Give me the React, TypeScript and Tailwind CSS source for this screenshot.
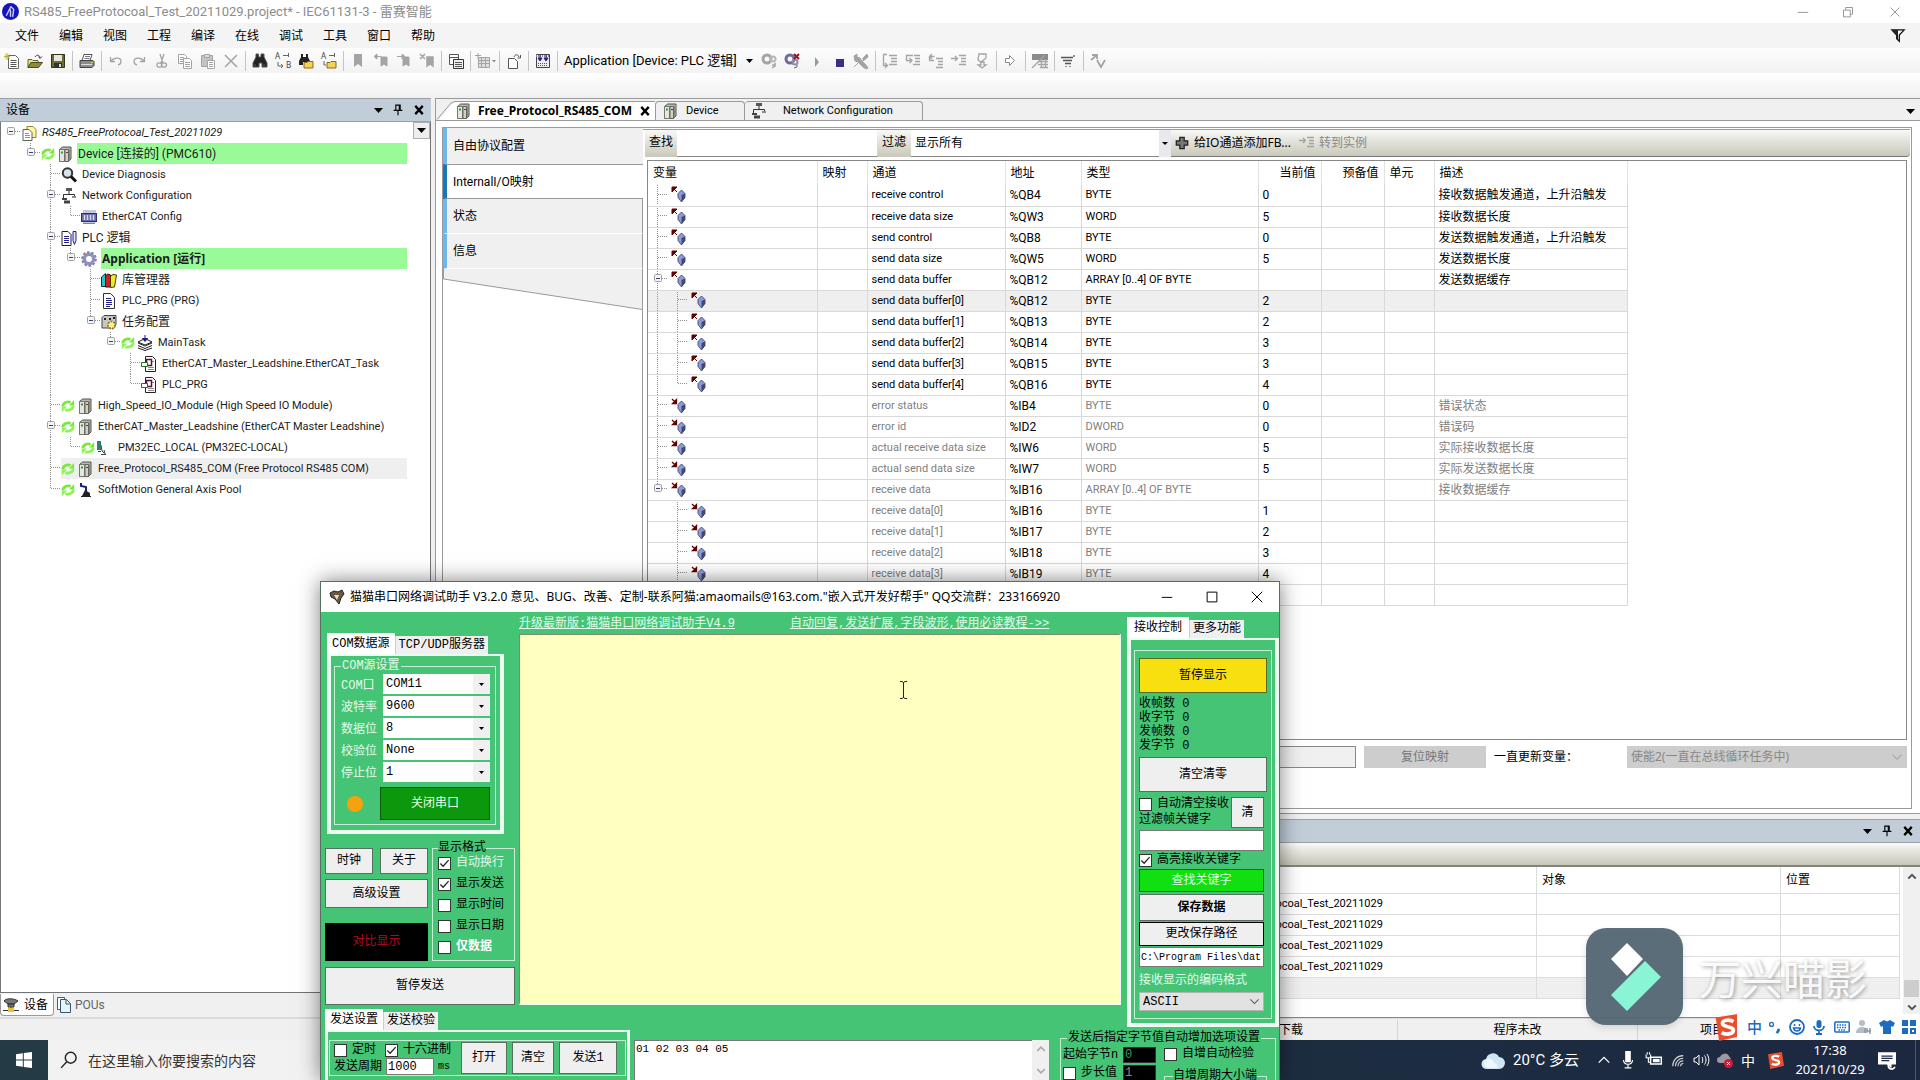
import { type ReactNode } from 'react'
import { clsx } from 'clsx'

const menus = ['文件', '编辑', '视图', '工程', '编译', '在线', '调试', '工具', '窗口', '帮助']

type TreeItem = { guide: string; icon: string; text: string; online?: boolean; tone?: 'root' | 'run' | 'app' | 'sel' }

// guide: one character per level. b/e/m = expander, t/l = branch, | = line
const tree: TreeItem[] = [
  { guide: 'b', icon: 'project', text: 'RS485_FreeProtocoal_Test_20211029', tone: 'root' },
  { guide: ' e', icon: 'device', text: 'Device [连接的] (PMC610)', online: true, tone: 'run' },
  { guide: '  t', icon: 'magnifier', text: 'Device Diagnosis' },
  { guide: '  m', icon: 'network', text: 'Network Configuration' },
  { guide: '  |l', icon: 'ethercat', text: 'EtherCAT Config' },
  { guide: '  m', icon: 'plc', text: 'PLC 逻辑' },
  { guide: '  |e', icon: 'gear', text: 'Application [运行]', tone: 'app' },
  { guide: '  | t', icon: 'books', text: '库管理器' },
  { guide: '  | t', icon: 'pou', text: 'PLC_PRG (PRG)' },
  { guide: '  | e', icon: 'taskcfg', text: '任务配置' },
  { guide: '  |  e', icon: 'task', text: 'MainTask', online: true },
  { guide: '  |   t', icon: 'call', text: 'EtherCAT_Master_Leadshine.EtherCAT_Task' },
  { guide: '  |   l', icon: 'call', text: 'PLC_PRG' },
  { guide: '  t', icon: 'device', text: 'High_Speed_IO_Module (High Speed IO Module)', online: true },
  { guide: '  m', icon: 'device', text: 'EtherCAT_Master_Leadshine (EtherCAT Master Leadshine)', online: true },
  { guide: '  |l', icon: 'drive', text: 'PM32EC_LOCAL (PM32EC-LOCAL)', online: true },
  { guide: '  t', icon: 'device', text: 'Free_Protocol_RS485_COM (Free Protocol RS485 COM)', online: true, tone: 'sel' },
  { guide: '  l', icon: 'axis', text: 'SoftMotion General Axis Pool', online: true },
]

type Channel = { guide: string; name: string; addr: string; type: string; value: string; desc?: string }

const channels: Channel[] = [
  { guide: 't', name: 'receive control', addr: '%QB4', type: 'BYTE', value: '0', desc: '接收数据触发通道，上升沿触发' },
  { guide: 't', name: 'receive data size', addr: '%QW3', type: 'WORD', value: '5', desc: '接收数据长度' },
  { guide: 't', name: 'send control', addr: '%QB8', type: 'BYTE', value: '0', desc: '发送数据触发通道，上升沿触发' },
  { guide: 't', name: 'send data size', addr: '%QW5', type: 'WORD', value: '5', desc: '发送数据长度' },
  { guide: 'm', name: 'send data buffer', addr: '%QB12', type: 'ARRAY [0..4] OF BYTE', value: '', desc: '发送数据缓存' },
  { guide: '|t', name: 'send data buffer[0]', addr: '%QB12', type: 'BYTE', value: '2' },
  { guide: '|t', name: 'send data buffer[1]', addr: '%QB13', type: 'BYTE', value: '2' },
  { guide: '|t', name: 'send data buffer[2]', addr: '%QB14', type: 'BYTE', value: '3' },
  { guide: '|t', name: 'send data buffer[3]', addr: '%QB15', type: 'BYTE', value: '3' },
  { guide: '|l', name: 'send data buffer[4]', addr: '%QB16', type: 'BYTE', value: '4' },
  { guide: 't', name: 'error status', addr: '%IB4', type: 'BYTE', value: '0', desc: '错误状态' },
  { guide: 't', name: 'error id', addr: '%ID2', type: 'DWORD', value: '0', desc: '错误码' },
  { guide: 't', name: 'actual receive data size', addr: '%IW6', type: 'WORD', value: '5', desc: '实际接收数据长度' },
  { guide: 't', name: 'actual send data size', addr: '%IW7', type: 'WORD', value: '5', desc: '实际发送数据长度' },
  { guide: 'e', name: 'receive data', addr: '%IB16', type: 'ARRAY [0..4] OF BYTE', value: '', desc: '接收数据缓存' },
  { guide: ' t', name: 'receive data[0]', addr: '%IB16', type: 'BYTE', value: '1' },
  { guide: ' t', name: 'receive data[1]', addr: '%IB17', type: 'BYTE', value: '2' },
  { guide: ' t', name: 'receive data[2]', addr: '%IB18', type: 'BYTE', value: '3' },
  { guide: ' t', name: 'receive data[3]', addr: '%IB19', type: 'BYTE', value: '4' },
  { guide: ' l', name: 'receive data[4]', addr: '%IB20', type: 'BYTE', value: '5' },
]

const serialSettings = [
  { label: 'COM口', value: 'COM11' },
  { label: '波特率', value: '9600' },
  { label: '数据位', value: '8' },
  { label: '校验位', value: 'None' },
  { label: '停止位', value: '1' },
]

const UI = '[font-family:Noto_Sans,Noto_Sans_CJK_SC,sans-serif]'
const NARROW = '[font-family:Roboto,Noto_Sans_CJK_SC,sans-serif]'
const SONG = '[font-family:Liberation_Mono,Noto_Sans_CJK_SC,monospace]'

const hasHan = (s: string) => /[\u4e00-\u9fff]/.test(s)

function Svg({ children, className, size = 16 }: { children: ReactNode; className?: string; size?: number }) {
  return (
    <svg width={size} height={size} viewBox="0 0 16 16" fill="none" aria-hidden="true" className={clsx('shrink-0 overflow-visible', className)}>
      {children}
    </svg>
  )
}

function Guide({ kind }: { kind: string }) {
  const box = 'bem'.includes(kind)
  return (
    <svg width="20" height="21" viewBox="0 0 20 21" aria-hidden="true" className="shrink-0">
      <g stroke="#909090" strokeDasharray="1 1" fill="none">
        {'|tm'.includes(kind) && <path d="M9.500 0V21" />}
        {'le'.includes(kind) && <path d="M9.500 0V10" />}
        {(box || 'tl'.includes(kind)) && <path d="M10 9.500H20" />}
      </g>
      {box && (
        <>
          <rect x="6.500" y="5.500" width="7" height="7" rx="1" fill="#f4f4f4" stroke="#a0a0a0" />
          <path d="M8 9.500H12" stroke="#304080" />
        </>
      )}
    </svg>
  )
}

function TreeIcon({ name }: { name: string }) {
  switch (name) {
    case 'project':
      return (
        <Svg>
          <path d="M6 1.500h6l3 3v8H6z" fill="#fff6a0" stroke="#8a8a30" />
          <path d="M2 4.500h6l3 3v8H2z" fill="#fff" stroke="#606060" />
          <path d="M4 8.500h4M4 10.500h5M4 12.500h5" stroke="#909090" />
        </Svg>
      )
    case 'device':
      return (
        <Svg>
          <path d="M2.500 3.500l3-2.500h8.500v12l-2.500 2.500h-9z" fill="#b9b9b4" stroke="#55554f" />
          <path d="M2.500 3.500h5v12h-5z" fill="#e4e6e0" stroke="#77776f" />
          <path d="M8 3.500h3.500v12H8z" fill="#d0d0ca" stroke="#66665f" />
          <path d="M12 3.500l2-2v11l-2 2.500z" fill="#888882" />
          <path d="M4 6.500h2" stroke="#2ca02c" strokeWidth="2" />
          <path d="M9 6.500h2" stroke="#a02020" />
        </Svg>
      )
    case 'magnifier':
      return (
        <Svg>
          <circle cx="6.500" cy="6" r="4.700" fill="#d8e4ea" stroke="#333" strokeWidth="2" />
          <path d="M10 9.500l5 5" stroke="#111" strokeWidth="3" />
        </Svg>
      )
    case 'network':
      return (
        <Svg>
          <path d="M5 0h6v3H5z" fill="#555" />
          <path d="M8 3v3.500M2.500 10V6.500h11V9" stroke="#333" />
          <path d="M1 10h5v2H1zM3 12.500h6v3H3z" fill="#444" />
          <path d="M11 9h4" stroke="#8a8a9a" strokeWidth="2" />
        </Svg>
      )
    case 'ethercat':
      return (
        <Svg>
          <rect x="2" y="1" width="13" height="13" fill="#c5c9dc" />
          <rect x="0.500" y="4.500" width="15" height="8" fill="#6a6aa8" stroke="#2e2e70" />
          <path d="M3.500 6v5M6.500 6v5M9.500 6v5M12.500 6v5" stroke="#d8d8f4" strokeWidth="1.500" />
          <path d="M2 14.500h12" stroke="#8080b0" />
        </Svg>
      )
    case 'plc':
      return (
        <Svg>
          <path d="M1 1.500h6l3 3v11H1z" fill="#fff" stroke="#222" />
          <path d="M3 6.500h5M3 8.500h5M3 10.500h5M3 12.500h5" stroke="#22228a" />
          <path d="M12 1.500h3v9l-1.500 4-1.500-4z" fill="#dfe2ff" stroke="#22228a" />
        </Svg>
      )
    case 'gear':
      return (
        <Svg>
          <circle cx="8" cy="8" r="6.800" stroke="#7c7ca0" strokeWidth="2" strokeDasharray="2.500 1.770" />
          <circle cx="8" cy="8" r="4.700" fill="#fff" stroke="#9090b8" strokeWidth="3.500" />
        </Svg>
      )
    case 'books':
      return (
        <Svg>
          <path d="M0.500 5l4-3.500v13h-4z" fill="#20c8c8" stroke="#053838" />
          <path d="M4.500 4l2-2 3 1v12h-5z" fill="#d02020" stroke="#400" />
          <path d="M9.500 4l2.500-1.500 3.500.5-2 12-4 .500z" fill="#f2e830" stroke="#443c00" />
        </Svg>
      )
    case 'pou':
      return (
        <Svg>
          <path d="M2.500 0.500h7l4 4v11h-11z" fill="#fff" stroke="#333" />
          <path d="M5 5.500h5M5 7.500h6M5 9.500h6M5 11.500h6M5 13.500h4" stroke="#22228a" />
        </Svg>
      )
    case 'taskcfg':
      return (
        <Svg>
          <path d="M1 3.500l2-2h12v9l-2 3.500H1z" fill="#c8c8c2" stroke="#444" />
          <path d="M3 5h2M8 5h2M12 4h2" stroke="#222" strokeWidth="2" />
          <circle cx="10.500" cy="11" r="3.500" fill="#fff" stroke="#8f7a10" strokeWidth="2" strokeDasharray="2 1" />
          <circle cx="10.500" cy="11" r="2" fill="#ffee60" />
        </Svg>
      )
    case 'task':
      return (
        <Svg>
          <path d="M1 8l7 3 7-3M1 10.500l7 3 7-3M1 13l7 2.500 7-2.500" stroke="#222" />
          <path d="M1 7l7-3.500L15 7l-7 3z" fill="#fff" stroke="#222" />
          <path d="M8 0v5M5.500 3.500L8 6.500l2.500-3z" fill="#1a1a8a" stroke="#1a1a8a" />
        </Svg>
      )
    case 'call':
      return (
        <Svg>
          <path d="M4.500 0.500h7l3 3v12h-10z" fill="#fff" stroke="#222" />
          <path d="M7 11.500h6M7 13.500h6M11 5.500h2" stroke="#888" />
          <path d="M5.500 3.500h5v6h-5z" stroke="#5a1040" strokeWidth="1.500" />
          <path d="M0.500 6.500h6v4h-6z" fill="#fff" stroke="#207020" />
        </Svg>
      )
    case 'drive':
      return (
        <Svg>
          <path d="M0 1h4v9H0z" fill="#2f7f78" />
          <path d="M1 11.500h3M4 5l1 6 2 2M4 14.500h5M7 10l1 4" stroke="#444" />
        </Svg>
      )
    default:
      return (
        <Svg>
          <path d="M4 1v3l5 1v4" stroke="#1a1a8a" strokeWidth="2" />
          <path d="M8 8l5 3v3H5z" fill="#222" />
          <path d="M4 14.500h10" stroke="#222" />
        </Svg>
      )
  }
}

function OnlineIcon() {
  return (
    <Svg size={14}>
      <path d="M2 8.500A6 5.500 0 0 1 11 4" stroke="#7be83c" strokeWidth="3.200" />
      <path d="M14 7.500A6 5.500 0 0 1 5 12" stroke="#8cf45c" strokeWidth="3.200" />
      <path d="M9 7.500h6V1z" fill="#7be83c" />
      <path d="M7 8.500H1V15z" fill="#8cf45c" />
    </Svg>
  )
}

function PinIcon() {
  return (
    <Svg size={14}>
      <path d="M5.500 2.500h5v6h-5zM9.500 2.500v6M3 8.500h10M8 9v5" stroke="#000" strokeWidth="1.300" />
    </Svg>
  )
}

function CloseIcon({ className }: { className?: string }) {
  return (
    <Svg size={12} className={className}>
      <path d="M3 2.500l10 11M13 2.500l-10 11" stroke="#000" strokeWidth="3" />
    </Svg>
  )
}

function DownIcon({ className }: { className?: string }) {
  return (
    <svg width="9" height="5" viewBox="0 0 9 5" aria-hidden="true" className={clsx('shrink-0', className)}>
      <path d="M0 0h9L4.500 5z" fill="#000" />
    </svg>
  )
}

function PanelHeader({ title }: { title?: string }) {
  return (
    <div className="flex h-6 items-center gap-2 border-y border-[#9aa0a6] bg-[#c1cdd9] px-[6px]">
      <h2 className="flex-1 text-[12px] leading-5 text-black">{title}</h2>
      <button type="button" aria-label="菜单"><DownIcon /></button>
      <button type="button" aria-label="固定"><PinIcon /></button>
      <button type="button" aria-label="关闭"><CloseIcon /></button>
    </div>
  )
}

/* ---------- toolbar ---------- */

const G = '#a4a4a4'

const toolIcons: Record<string, ReactNode> = {
  new: (
    <>
      <path d="M4.500 2.500h7l3 3v10h-10z" fill="#fff" stroke="#666" />
      <path d="M6.500 7.500h6M6.500 9.500h6M6.500 11.500h6M6.500 13.500h6" stroke="#555" />
      <path d="M0 3.500h6M3 0v7M1 1.500l4 4M5 1.500l-4 4" stroke="#b4b43c" />
    </>
  ),
  open: (
    <>
      <path d="M1 6.500h4l1 1h5v2H4l-3 5z" fill="#e8e48a" stroke="#66662a" />
      <path d="M4 9.500h11.500l-4 5H1z" fill="#8c8c3c" stroke="#4c4c1c" />
      <path d="M8 4c2-3 5-2 5 1M11.500 3.500L13 5.500l2-2" stroke="#444" />
    </>
  ),
  save: (
    <>
      <path d="M1.500 1.500h13v13h-13z" fill="#6b6b32" stroke="#333318" />
      <path d="M4 2h8v6H4z" fill="#e6e6e6" />
      <path d="M4 10h8v5H4z" fill="#333" />
      <path d="M9 11h2v3H9z" fill="#ddd" />
    </>
  ),
  print: (
    <>
      <path d="M5 1.500h8l-2 6H3z" fill="#fff" stroke="#555" />
      <path d="M6 3.500h5M5.500 5.500h5" stroke="#777" />
      <path d="M1 7.500h13l1 1v4l-2 2H1z" fill="#8c8c8c" stroke="#444" />
      <path d="M2 11.500h11" stroke="#ddd" />
      <path d="M13 9v1" stroke="#e0d020" strokeWidth="2" />
    </>
  ),
  undo: <path d="M2.500 4v4.500H7M3 8c3-4 10-4 10 .5 0 2-1 3-3 3.500" stroke={G} strokeWidth="1.300" />,
  redo: <path d="M13.500 4v4.500H9M13 8C10 4 3 4 3 8.500 3 10.500 4 11.500 6 12" stroke={G} strokeWidth="1.300" />,
  cut: <path d="M6 1l3 9M10 1L7 10M6 10a2.200 2.200 0 1 0 0 4 2 2 0 0 0 0-4zM10.500 10a2.200 2.200 0 1 0 0 4 2 2 0 0 0 0-4z" stroke={G} strokeWidth="1.300" />,
  copy: (
    <>
      <path d="M1.500 1.500h6l2 2v7h-8z" fill="#fff" stroke={G} />
      <path d="M6.500 5.500h6l2 2v8h-8z" fill="#fff" stroke={G} />
      <path d="M3 4.500h4M3 6.500h3M3 8.500h3M8 9.500h5M8 11.500h5M8 13.500h5" stroke={G} />
    </>
  ),
  paste: (
    <>
      <path d="M1.500 2.500h11v11h-11z" fill="#c4c4c4" stroke={G} />
      <path d="M4.500 1.500h5v3h-5z" fill="#ddd" stroke={G} />
      <path d="M7.500 7.500h7v8h-7z" fill="#fff" stroke={G} />
      <path d="M9 9.500h4M9 11.500h4M9 13.500h4" stroke={G} />
    </>
  ),
  del: <path d="M2 2l12 12M14 2L2 14" stroke={G} strokeWidth="1.500" />,
  find: (
    <path d="M4 1h2.500v3H9V1h3v3l3 6v4h-5v-4H7v4H1v-4l3-6zM3 11v2M12 11v2" fill="#222" stroke="#555" />
  ),
  replace: (
    <>
      <text x="0" y="6" fontSize="8" fill="#444" className={UI}>A</text>
      <text x="11" y="15" fontSize="8" fill="#444" className={UI}>B</text>
      <path d="M8 2.500h5M13.500 0v4M3 9v4h5M6 11l2 2-2 2" stroke="#666" />
    </>
  ),
  findIn: (
    <>
      <path d="M3 1h2v3h3V1h2v3l2 4v3H8V9H5v3H1V8l2-4z" fill="#222" />
      <path d="M6 9.500h3l1-1h5v6.500H6z" fill="#f2d25c" stroke="#8a6d1c" />
    </>
  ),
  replaceIn: (
    <>
      <text x="0" y="6" fontSize="8" fill="#444" className={UI}>A</text>
      <path d="M8 2.500h5M13.500 0v4M3 8v4h2" stroke="#666" />
      <path d="M6 9.500h3l1-1h5v6.500H6z" fill="#f2d25c" stroke="#8a6d1c" />
    </>
  ),
  mark: <path d="M4 1h8v13l-4-3-4 3z" fill={G} />,
  markPrev: <path d="M8 4h6v9l-3-2-3 2zM1 3.500h7M1 3.500L4 1v5z" fill={G} stroke={G} />,
  markNext: <path d="M7 4h6v9l-3-2-3 2zM1 3.500h6M9 3.500L6 1v5z" fill={G} stroke={G} />,
  markClear: <path d="M8 4h6v9l-3-2-3 2zM1 1l5 5M6 1L1 6" fill={G} stroke={G} strokeWidth="1.500" />,
  props: (
    <>
      <path d="M1.500 1.500h9v10h-9zM1.500 4.500h9" fill="#fff" stroke="#555" />
      <path d="M5.500 6.500h10v9h-10z" fill="#eee" stroke="#333" />
      <path d="M7 9.500h7M7 11.500h7M7 13.500h7" stroke="#555" />
    </>
  ),
  grid: (
    <>
      <path d="M1.500 4.500h11v10h-11z" fill="#ddd" stroke={G} />
      <path d="M1 7.500h12M1 10.500h12M4.500 4v11M8.500 4v11" stroke={G} />
      <path d="M-2 2.500h6M1 0v6" stroke={G} />
      <path d="M15 7h4l-2 2.500z" fill="#888" />
    </>
  ),
  page: (
    <>
      <path d="M2.500 5.500h6l3 3v7h-9z" fill="#fff" stroke="#555" />
      <path d="M8 4c1-3 4-3 5 0M14.500 2v3h-3" stroke="#555" />
    </>
  ),
  build: (
    <>
      <path d="M1.500 1.500h13v13h-13z" fill="#eee" stroke="#444" />
      <path d="M1 3h14" stroke="#888" strokeDasharray="1 1" strokeWidth="2" />
      <path d="M5 2v4M3 5l2 3 2-3zM11 2v4M9 5l2 3 2-3z" fill="#22228a" stroke="#22228a" />
      <path d="M3 10.500h10M3 12.500h10" stroke="#555" strokeDasharray="1 1" />
    </>
  ),
  login: (
    <>
      <circle cx="6" cy="6" r="4" stroke={G} strokeWidth="3" />
      <circle cx="12" cy="6" r="2.500" stroke="#b8b8b8" strokeWidth="2" />
      <path d="M11 12h3M14 10v3l-3 2" stroke={G} strokeWidth="1.500" />
    </>
  ),
  logout: (
    <>
      <circle cx="6" cy="6" r="4" stroke="#6c6c9c" strokeWidth="3" />
      <circle cx="11" cy="9" r="2.500" stroke="#8c8cb0" strokeWidth="2" />
      <path d="M10 1l5 5M15 1l-5 5" stroke="#a01020" strokeWidth="2" />
      <path d="M13 12v2l-3 1" stroke="#666" />
    </>
  ),
  play: <path d="M8 4l4 5-4 5z" fill="#999" />,
  stop: <path d="M6 6h8v8H6z" fill="#3c2c8c" />,
  wrench: <path d="M1 3l3-2v3l3 1 1 2 5 5 2 3-2 1-3-2-5-5-3-1zM14 1l-4 4v3l5-4zM5 10l-4 4" fill={G} stroke={G} />,
  stepOver: <path d="M5 1.500H1.500v11H5M3 10l2.500 2.500L3 15M7 2.500h8M9 5.500h6M9 8.500h6M7 11.500h8" stroke={G} strokeWidth="1.300" />,
  stepInto: <path d="M8 2.500H1.500v5h5M4.500 5L7 7.500 4.500 10M9 2.500h6M10 5.500h5M10 8.500h5M8 11.500h7" stroke={G} strokeWidth="1.300" />,
  stepOut: <path d="M6 7.500H1.500v-4h5M4 1L1.500 3.500 4 6M8 5.500h7M10 8.500h5M10 11.500h5M8 14.500h7" stroke={G} strokeWidth="1.300" />,
  runTo: <path d="M0 5.500h6M4 3l2.500 2.500L4 8M8 2.500h7M10 5.500h5M10 8.500h5M8 11.500h7" stroke={G} strokeWidth="1.300" />,
  setNext: <path d="M5 1h7v4l-5 4h3v3h2l-4 3-4-3h3v-3L4 7z" stroke={G} strokeWidth="1.300" />,
  arrow: <path d="M2.500 5.500h4v-3l5 5-5 5v-3h-4z" fill="#fff" stroke="#888" />,
  flow: (
    <>
      <path d="M0 1h16v6H0z" fill="#8a8a8a" />
      <path d="M0 15L13 2M6 8.500h10M6 11.500h10M8 14.500h8M9.500 6v9M13.500 6v9" stroke={G} strokeWidth="1.300" />
    </>
  ),
  write: <path d="M0 4.500h12M2 7.500h9M4 10.500h6M5 13v1M9 13v1M13 2v2" stroke="#555" strokeWidth="1.300" />,
  force: <path d="M2 2h5v4M1 7l6-5M7 7l4 7M9 11l2 3 4-7" stroke={G} strokeWidth="1.800" />,
}

const toolsLeft = 'new open save | print | undo redo cut copy paste del | find replace findIn replaceIn | mark markPrev markNext markClear | props | grid | page | build |'
const toolsRight = 'login logout play stop wrench | stepOver stepInto stepOut runTo setNext | arrow | flow | write | force'

function ToolGroup({ names }: { names: string }) {
  return (
    <div className="flex items-center">
      {names.split(' ').map((n, i) =>
        n === '|' ? (
          <span key={i} className="flex w-[6px] justify-center"><span className="h-5 w-px bg-[#c4c4c4]" /></span>
        ) : (
          <button key={i} type="button" aria-label={n} className="flex h-6 w-[23px] items-center justify-center">
            <Svg>{toolIcons[n]}</Svg>
          </button>
        ),
      )}
    </div>
  )
}

function Header() {
  return (
    <header>
      <div className="flex h-[23px] items-center bg-white pl-[2px]">
        <svg width="17" height="17" viewBox="0 0 16 16" aria-hidden="true">
          <circle cx="8" cy="8" r="8" fill="#1414c0" />
          <path d="M8 3l3 3-1 7M8 4l-4 8M8 6v7" stroke="#cdd4ff" strokeWidth="1.300" fill="none" />
        </svg>
        <h1 className={clsx('ml-[5px] flex-1 text-[13px] leading-5 text-[#8c8c8c]', NARROW)}>
          RS485_FreeProtocoal_Test_20211029.project* - IEC61131-3 - 雷赛智能
        </h1>
        <div className="flex text-[#777]">
          <button type="button" aria-label="最小化" className="flex w-[45px] justify-center"><Svg size={12}><path d="M1 8.500h14" stroke="currentColor" /></Svg></button>
          <button type="button" aria-label="还原" className="flex w-[45px] justify-center"><Svg size={12}><path d="M2 5.500h9v9H2zM5 5V2h9v9h-3" stroke="currentColor" /></Svg></button>
          <button type="button" aria-label="关闭" className="flex w-[50px] justify-center"><Svg size={12}><path d="M2 2l12 12M14 2L2 14" stroke="currentColor" /></Svg></button>
        </div>
      </div>
      <nav className="flex h-[25px] items-center bg-[#f4f4f4] pl-[5px]">
        {menus.map((m) => (
          <button key={m} type="button" className="w-11 text-center text-[12px] leading-6 text-black">{m}</button>
        ))}
        <span className="flex-1" />
        <Svg size={14} className="mr-[15px]"><path d="M1 1h14L9.500 7v7L6.500 11V7z" fill="#fff" stroke="#111" strokeWidth="1.500" /><path d="M8 7v6L6.500 11V7L1 1h7z" fill="#222" /></Svg>
      </nav>
      <div className="flex h-[25px] items-center bg-gradient-to-b from-[#fdfdfd] to-[#f2f2f2]">
        <ToolGroup names={toolsLeft} />
        <button type="button" className={clsx('flex items-center whitespace-nowrap pl-1 text-[13px] text-black', NARROW)}>
          <span className="w-[182px] text-left">Application [Device: PLC 逻辑]</span>
          <svg width="7" height="4" viewBox="0 0 7 4" aria-hidden="true" className="mr-1"><path d="M0 0h7L3.500 4z" /></svg>
        </button>
        <ToolGroup names={toolsRight} />
      </div>
      <div className="h-[25px] bg-gradient-to-b from-white to-[#f0f0f0]" />
    </header>
  )
}

/* ---------- device tree ---------- */

function DevicePanel() {
  return (
    <aside className="flex w-[431px] shrink-0 flex-col">
      <PanelHeader title="设备" />
      <div className="relative flex-1 border border-t-0 border-[#70757a] bg-white">
        <button type="button" aria-label="展开" className="absolute right-0 top-0 flex h-[17px] w-[17px] items-center justify-center border border-[#b0b0b0] bg-[#eee]">
          <DownIcon />
        </button>
        <ul className="mr-[23px]">
          {tree.map((t, i) => (
            <li
              key={i}
              className={clsx('flex h-[21px] items-center whitespace-nowrap leading-5 text-[#1c1c1c]', NARROW, hasHan(t.text) ? 'text-[12px]' : 'text-[11px]')}
            >
              {t.guide.split('').map((g, k) => <Guide key={k} kind={g} />)}
              <span className={clsx('flex h-full flex-1 items-center', t.tone === 'sel' && 'bg-[#efefef]')}>
                {t.online && <span className="mr-[2px]"><OnlineIcon /></span>}
                <TreeIcon name={t.icon} />
                <a
                  href="#"
                  className={clsx(
                    'ml-1 flex-1 pl-px pt-px',
                    t.tone === 'root' && 'italic',
                    t.tone === 'run' && 'bg-[#98fb98]',
                    t.tone === 'app' && ['bg-[#98fb98] font-bold', UI],
                  )}
                >
                  {t.text}
                </a>
              </span>
            </li>
          ))}
        </ul>
      </div>
      <div className="flex h-[25px] items-start border-b border-[#d8d8d8] pt-px text-[12px]">
        <button type="button" className="flex h-[22px] items-center gap-[5px] rounded-b border border-t-0 border-[#999] bg-white pl-[2px] pr-[5px] text-black">
          <Svg><path d="M1 4c2-3 10-3 14 0l-4 3H5zM5 7h6v3H5z" fill="#777" stroke="#333" /><path d="M0 13.500h16M8 10v3" stroke="#333" /><path d="M5 11h6v4H5z" fill="#e8c030" /></Svg>
          <span>设备</span>
        </button>
        <button type="button" className={clsx('ml-[2px] flex h-[22px] items-center gap-[3px] text-[#666]', NARROW)}>
          <Svg><path d="M1.500 0.500h7v12h-7z" fill="#fff" stroke="#557" /><path d="M4.500 2.500h6l4 4v9h-10z" fill="#e8f4fa" stroke="#357" /><path d="M10 3v4h4" stroke="#357" /></Svg>
          <span>POUs</span>
        </button>
      </div>
    </aside>
  )
}

/* ---------- editor ---------- */

function ChannelIcon({ input }: { input: boolean }) {
  return (
    <Svg className="ml-[3px]">
      {input ? <path d="M1 1l4 4M5.500 1.500v4h-4z" fill="#600" stroke="#600" strokeWidth="1.300" /> : <path d="M1 0h5L1 5zM2 1l4 4" fill="#600" stroke="#600" />}
      <path d="M10.500 3l3.500 3.500v4L10.500 15 7 10.500v-4z" fill="#8d9ad8" stroke="#333a60" strokeWidth="0.800" />
      <path d="M10.500 8L14 6.500v4L10.500 15z" fill="#404a70" />
    </Svg>
  )
}

function ChannelTable() {
  const th = 'border-r border-[#e2e2e2] px-[5px] text-left font-normal'
  return (
    <table className={clsx('table-fixed border-collapse text-[12px] leading-5 text-black', NARROW)}>
      <colgroup>
        <col className="w-[169px]" />
        <col className="w-[50px]" />
        <col className="w-[138px]" />
        <col className="w-[76px]" />
        <col className="w-[177px]" />
        <col className="w-[63px]" />
        <col className="w-[63px]" />
        <col className="w-[50px]" />
        <col className="w-[193px]" />
      </colgroup>
      <thead>
        <tr className="h-6">
          <th className={th}>变量</th>
          <th className={th}>映射</th>
          <th className={th}>通道</th>
          <th className={th}>地址</th>
          <th className={th}>类型</th>
          <th className="border-r border-[#e2e2e2] px-[5px] text-right font-normal">当前值</th>
          <th className="border-r border-[#e2e2e2] px-[5px] text-right font-normal">预备值</th>
          <th className={th}>单元</th>
          <th className={th}>描述</th>
        </tr>
      </thead>
      <tbody>
        {channels.map((c, i) => {
          const input = c.addr.startsWith('%I')
          const muted = input ? 'text-[#808080]' : ''
          const sel = i === 5
          const td = 'overflow-hidden whitespace-nowrap border-b border-r border-[#d9d9d9] py-0 pl-1'
          return (
            <tr key={c.name} className={clsx('h-[21px]', sel && 'bg-[#efefef]')}>
              <td className="border-b border-r border-[#d9d9d9] p-0">
                <span className="flex h-5 items-center overflow-hidden">
                  {c.guide.split('').map((g, k) => <Guide key={k} kind={g} />)}
                  <ChannelIcon input={input} />
                </span>
              </td>
              <td className={td} />
              <td className={clsx(td, muted, 'text-[11px]')}>{c.name}</td>
              <td className={td}>{c.addr}</td>
              <td className={clsx(td, muted, 'text-[11px]')}>{c.type}</td>
              <td className={td}>{c.value}</td>
              <td className={td} />
              <td className={td} />
              <td className={clsx(td, muted)}>{c.desc}</td>
            </tr>
          )
        })}
      </tbody>
    </table>
  )
}

function SideNav() {
  const item = 'block h-[35px] w-full border-l-4 pl-[6px] text-left text-[12px] text-black'
  return (
    <nav className="flex w-[200px] shrink-0 flex-col">
      <button type="button" className={clsx(item, 'h-[36px] border-[#6cb8ea] bg-[#f0f0f0]')}>自由协议配置</button>
      <button type="button" className={clsx(item, NARROW, 'border-y border-l-[#1878b8] border-y-[#999] bg-white')}>InternalI/O映射</button>
      <button type="button" className={clsx(item, 'border-b border-r border-b-white border-l-[#6cb8ea] border-r-[#999] bg-[#f0f0f0]')}>状态</button>
      <button type="button" className={clsx(item, 'border-b border-r border-b-white border-l-[#6cb8ea] border-r-[#999] bg-[#f0f0f0]')}>信息</button>
      <svg width="200" height="41" viewBox="0 0 200 41" aria-hidden="true">
        <path d="M0.500 0V10L199.500 40.500V0" fill="#f0f0f0" stroke="#999" />
      </svg>
      <span className="flex-1 border-r border-[#999]" />
    </nav>
  )
}

function Editor() {
  const strip = 'bg-gradient-to-b from-[#f8f8f6] to-[#c8c8ba]'
  return (
    <section className="flex min-h-0 flex-1 flex-col border border-r-0 border-[#9a9a9a] bg-white">
      <div className="flex h-[22px] items-end border-b border-[#9a9a9a] bg-[#f0f0f0]">
        <div className="flex h-[19px] items-center border-t border-[#9a9a9a] bg-white text-[12px] font-bold text-black">
          <svg width="19" height="19" viewBox="0 0 19 19" aria-hidden="true" className="-mt-px">
            <path d="M0 0h19L3 19H0z" fill="#f0f0f0" />
            <path d="M1 18.500L15 2l4-1.500" stroke="#9a9a9a" fill="none" />
          </svg>
          <TreeIcon name="device" />
          <button type="button" className="w-[168px] text-center">Free_Protocol_RS485_COM</button>
          <button type="button" aria-label="关闭"><CloseIcon className="mr-1" /></button>
        </div>
        <button type="button" className={clsx('flex h-[19px] w-[90px] items-center gap-2 rounded-t border-x border-t border-[#9a9a9a] pl-[6px] text-[11px] text-black', NARROW)}>
          <TreeIcon name="device" />
          <span>Device</span>
        </button>
        <button type="button" className={clsx('flex h-[19px] w-[178px] items-center gap-4 rounded-t border-r border-t border-[#9a9a9a] pl-[6px] text-[11px] text-black', NARROW)}>
          <TreeIcon name="network" />
          <span>Network Configuration</span>
        </button>
        <span className="flex-1" />
        <DownIcon className="mb-[6px] mr-[5px]" />
      </div>
      <div className="mb-1 ml-[6px] mr-2 mt-[6px] flex min-h-0 flex-1 border border-[#9a9a9a]">
        <SideNav />
        <div className="mr-px mt-px flex min-w-0 flex-1 flex-col border-t border-[#9a9a9a] pl-[2px]">
          <div className="flex h-[27px] items-stretch text-[12px] leading-6 text-black">
            <label htmlFor="find" className={clsx('w-8 text-center', strip)}>查找</label>
            <input id="find" className="w-[200px] border-b border-[#888] bg-white px-1 outline-none" />
            <label htmlFor="filter" className={clsx('w-[34px] text-center', strip)}>过滤</label>
            <div className="relative w-[260px]">
              <select id="filter" className="h-full w-full appearance-none border-b border-[#888] bg-white pl-1 outline-none">
                <option>显示所有</option>
              </select>
              <span className="pointer-events-none absolute inset-y-0 right-0 flex w-3 items-center justify-center bg-[#e8e8ee]">
                <svg width="6" height="3" viewBox="0 0 6 3" aria-hidden="true"><path d="M0 0h6L3 3z" /></svg>
              </span>
            </div>
            <div className={clsx('flex flex-1 items-center rounded-r border-b border-[#777] pl-1', strip)}>
              <button type="button" className="flex items-center gap-[5px]">
                <Svg size={14}><path d="M5.500 1.500h5v4h4v5h-4v4h-5v-4h-4v-5h4z" fill="#777" stroke="#222" strokeWidth="1.500" /></Svg>
                <span>给IO通道添加FB...</span>
              </button>
              <button type="button" className="ml-2 flex items-center gap-1 text-[#888]">
                <Svg>{toolIcons.runTo}</Svg>
                <span>转到实例</span>
              </button>
            </div>
          </div>
          <div className="ml-[2px] mr-[3px] mt-[3px] min-h-0 flex-1 overflow-hidden border border-[#888]">
            <ChannelTable />
          </div>
          <div className="mb-10 mr-[3px] mt-[6px] flex h-[22px] shrink-0 items-center text-[12px] text-black">
            <input aria-label="映射" disabled className="h-full min-w-0 flex-1 border border-[#888] bg-[#f0f0f0]" />
            <button type="button" className="ml-2 h-full w-[122px] bg-[#cdcdcd] text-[#777]">复位映射</button>
            <label htmlFor="update" className="ml-2 w-[133px] whitespace-nowrap">一直更新变量：</label>
            <div className="relative h-full w-[280px]">
              <select id="update" disabled className="h-full w-full appearance-none bg-[#cdcdcd] pl-1 text-[#888] opacity-100">
                <option>使能2(一直在总线循环任务中)</option>
              </select>
              <Svg size={12} className="pointer-events-none absolute right-1 top-[5px]"><path d="M2 5l6 6 6-6" stroke="#aaa" strokeWidth="1.500" /></Svg>
            </div>
          </div>
        </div>
      </div>
    </section>
  )
}

function Messages() {
  const cell = 'border-b border-r border-[#dcdcdc] p-0'
  return (
    <section className="mt-[5px]">
      <PanelHeader />
      <div className="h-6 border-b-2 border-[#84847c] bg-gradient-to-b from-[#fafaf8] to-[#c6c6b8]" />
      <div className="flex h-[151px] border-b border-[#888] bg-white">
        <div className="flex-1">
          <table className={clsx('w-full table-fixed border-collapse text-[12px] leading-5 text-black', NARROW)}>
            <colgroup>
              <col />
              <col className="w-[345px]" />
              <col className="w-[244px]" />
              <col className="w-[119px]" />
            </colgroup>
            <thead>
              <tr className="h-[26px] text-left">
                <th className={cell} />
                <th className={cell} />
                <th className="border-b border-r border-[#dcdcdc] pl-[5px] font-normal">对象</th>
                <th className="border-b border-r border-[#dcdcdc] pl-[5px] font-normal">位置</th>
              </tr>
            </thead>
            <tbody>
              {[0, 1, 2, 3].map((n) => (
                <tr key={n} className="h-[21px]">
                  <td className={cell} />
                  <td className="whitespace-nowrap border-b border-r border-[#dcdcdc] py-0 pl-[5px] text-[11px]">RS485_FreeProtocoal_Test_20211029</td>
                  <td className={cell} />
                  <td className={cell} />
                </tr>
              ))}
              <tr className="h-[21px] bg-[#efefef]">
                <td className={cell} />
                <td className={cell} />
                <td className={cell} />
                <td className={cell} />
              </tr>
            </tbody>
          </table>
        </div>
        <div className="ml-[3px] flex w-[17px] flex-col items-center justify-between bg-[#f0f0f0] py-1">
          <Svg size={12}><path d="M3 10l5-5 5 5" stroke="#555" strokeWidth="2.500" /></Svg>
          <span className="flex-1" />
          <span className="mb-1 h-[17px] w-[15px] bg-[#cdcdcd]" />
          <Svg size={12}><path d="M3 6l5 5 5-5" stroke="#555" strokeWidth="2.500" /></Svg>
        </div>
      </div>
    </section>
  )
}

function StatusBar() {
  return (
    <footer className="flex h-[22px] items-center justify-end border-t border-[#dcdcdc] bg-[#f0f0f0] text-[12px] leading-5 text-black">
      <span className="w-[119px] border-r border-[#d4d4d4]">下载</span>
      <span className="w-[240px] border-r border-[#d4d4d4] text-center">程序未改</span>
      <span className="w-[282px] pl-[62px]">项目</span>
    </footer>
  )
}

/* ---------- serial assistant window ---------- */

function Check({ id, label, checked, className }: { id: string; label: string; checked?: boolean; className?: string }) {
  return (
    <span className="flex items-center gap-[5px]">
      <span className="relative flex">
        <input id={id} type="checkbox" defaultChecked={checked} className="peer h-[13px] w-[13px] appearance-none border border-[#333] bg-white" />
        <Svg size={11} className="pointer-events-none absolute left-px top-px hidden peer-checked:block"><path d="M2 8l4 4 8-9" stroke="#222" strokeWidth="1.800" /></Svg>
      </span>
      <label htmlFor={id} className={clsx('whitespace-nowrap', className)}>{label}</label>
    </span>
  )
}

function Btn({ children, className }: { children: ReactNode; className?: string }) {
  return <button type="button" className={clsx('border whitespace-nowrap', className)}>{children}</button>
}

const plain = 'border-[#55705f] bg-[#efefef] text-black'

function Tabs({ names, wide }: { names: [string, string]; wide?: boolean }) {
  return (
    <div className="flex items-end whitespace-nowrap text-black">
      <button type="button" className={clsx('h-[21px] bg-white', wide ? 'px-[7px]' : 'px-[5px]')}>{names[0]}</button>
      <button type="button" className="h-[18px] border-l border-[#ccc] bg-[#efefef] px-[3px]">{names[1]}</button>
    </div>
  )
}

function SerialPanel() {
  return (
    <div className="flex w-[194px] shrink-0 flex-col pl-[4px] pt-[21px]">
      <div className="ml-[2px] w-[177px]">
        <Tabs names={['COM数据源', 'TCP/UDP服务器']} />
        <div className="border-4 border-t-2 border-[#eefbf2] pb-[5px] pl-[3px] pr-[4px] pt-[2px]">
          <fieldset className="border border-[#c5efd4] pb-1 pl-[6px] pr-[5px] text-[#e2fbea]">
            <legend className="px-px leading-4">COM源设置</legend>
            <div className="flex flex-col gap-[2px]">
              {serialSettings.map((s) => (
                <div key={s.label} className="flex h-5 items-center">
                  <label htmlFor={s.label} className="w-[42px] pt-1 leading-4">{s.label}</label>
                  <div className="relative h-full flex-1">
                    <select id={s.label} className="h-full w-full appearance-none bg-white pl-[3px] text-black outline-none">
                      <option>{s.value}</option>
                    </select>
                    <span className="pointer-events-none absolute inset-y-0 right-0 flex w-[17px] items-center justify-center bg-[#f0f0f0]">
                      <svg width="5" height="3" viewBox="0 0 5 3" aria-hidden="true"><path d="M0 0h5L2.500 3z" /></svg>
                    </span>
                  </div>
                </div>
              ))}
            </div>
            <div className="mt-[5px] flex items-center">
              <span className="ml-[6px] h-4 w-4 rounded-full bg-[#f5a20c]" />
              <Btn className="ml-auto h-[33px] w-[110px] border-[#0a5c0a] bg-[#0c980c] text-[#e8ffe8]">关闭串口</Btn>
            </div>
          </fieldset>
        </div>
      </div>
      <div className="mt-[6px] flex gap-1">
        <div className="flex w-[103px] flex-col pt-2">
          <div className="flex justify-between">
            <Btn className={clsx(plain, 'h-[26px] w-12')}>时钟</Btn>
            <Btn className={clsx(plain, 'h-[26px] w-12')}>关于</Btn>
          </div>
          <Btn className={clsx(plain, 'mt-[5px] h-[29px]')}>高级设置</Btn>
          <Btn className="mt-[15px] h-[38px] border-black bg-black text-[#b8081c]">对比显示</Btn>
        </div>
        <fieldset className="w-[83px] border border-[#c5efd4] pl-[5px] leading-4 text-black">
          <legend className="leading-4">显示格式</legend>
          <div className="-mt-px flex flex-col gap-[5px]">
            <Check id="wrap" label="自动换行" checked className="text-[#e2fbea]" />
            <Check id="showSend" label="显示发送" checked />
            <Check id="showTime" label="显示时间" />
            <Check id="showDate" label="显示日期" />
            <Check id="dataOnly" label="仅数据" className="font-bold text-white" />
          </div>
        </fieldset>
      </div>
      <Btn className={clsx(plain, 'mt-[6px] h-[38px]')}>暂停发送</Btn>
    </div>
  )
}

function ReceivePanel() {
  return (
    <div className="-mb-4 w-[152px] shrink-0 pt-[5px]">
      <Tabs names={['接收控制', '更多功能']} wide />
      <div className="border-4 border-t-2 border-[#eefbf2] px-[3px] pb-1 pt-[10px]">
        <div className="flex flex-col border border-[#c5efd4] px-1 pb-[7px] pt-[7px] text-black">
          <Btn className="h-[35px] border-[#5c6a14] bg-[#f8e010] text-black">暂停显示</Btn>
          <div className="my-1 leading-[14px]">
            <p>收帧数 0</p>
            <p>收字节 0</p>
            <p>发帧数 0</p>
            <p>发字节 0</p>
          </div>
          <Btn className={clsx(plain, 'h-[35px]')}>清空清零</Btn>
          <div className="mr-[3px] flex flex-col">
            <div className="mt-1 flex justify-between">
              <div className="leading-4">
                <Check id="autoClear" label="自动清空接收" />
                <label htmlFor="filterKey" className="block">过滤帧关键字</label>
              </div>
              <Btn className={clsx(plain, '-ml-2 mt-px h-[31px] w-[33px]')}>清</Btn>
            </div>
            <input id="filterKey" className="mt-[2px] h-[21px] border border-[#777] bg-white px-1" />
            <div className="my-px leading-4">
              <Check id="highlight" label="高亮接收关键字" checked />
            </div>
            <Btn className="h-[23px] border-[#0a6a0a] bg-[#10e010] text-[#e2fbea]">查找关键字</Btn>
            <Btn className={clsx(plain, 'mt-[2px] h-[27px] font-bold')}>保存数据</Btn>
            <Btn className="mt-px h-6 border-black bg-[#efefef] text-black">更改保存路径</Btn>
            <input aria-label="保存路径" defaultValue="C:\Program Files\dat" className="mt-px h-5 border border-[#777] bg-white px-px text-[10px] text-black" />
            <label htmlFor="encoding" className="mb-[3px] mt-[6px] leading-4 text-[#e2fbea]">接收显示的编码格式</label>
            <div className="relative h-[19px]">
              <select id="encoding" className="h-full w-full appearance-none border border-[#b4b4b4] bg-[#e2e2e2] pl-[3px] text-black">
                <option>ASCII</option>
              </select>
              <Svg size={11} className="pointer-events-none absolute right-1 top-1"><path d="M2 5l6 6 6-6" stroke="#555" strokeWidth="1.500" /></Svg>
            </div>
          </div>
        </div>
      </div>
    </div>
  )
}

function SendArea() {
  return (
    <div className="flex pl-[4px]">
      <div className="w-[305px] shrink-0">
        <Tabs names={['发送设置', '发送校验']} />
        <div className="h-20 border-x-[3px] border-t-2 border-[#eefbf2] px-px pt-[8px]">
          <div className="flex gap-[5px] border border-[#c5efd4] pl-1 pt-px text-black">
            <div className="w-[122px] leading-4">
              <div className="flex gap-[9px]">
                <Check id="timer" label="定时" />
                <Check id="hex" label="十六进制" checked />
              </div>
              <div className="flex items-center">
                <label htmlFor="period" className="w-[52px]">发送周期</label>
                <input id="period" defaultValue="1000" className="h-[17px] w-12 border border-[#777] bg-white px-px" />
                <span className="ml-1 text-[10px]">ms</span>
              </div>
            </div>
            <Btn className={clsx(plain, 'h-8 w-[46px]')}>打开</Btn>
            <Btn className={clsx(plain, 'h-8 w-[42px]')}>清空</Btn>
            <Btn className={clsx(plain, 'h-8 w-[58px]')}>发送1</Btn>
          </div>
        </div>
      </div>
      <div className="ml-1 mt-[31px] flex flex-1">
        <textarea aria-label="发送数据" defaultValue="01 02 03 04 05" className="h-12 flex-1 resize-none border border-r-0 border-[#777] bg-white px-px pt-px text-[11px] leading-[14px] text-black outline-none" />
        <div className="flex h-12 w-[17px] flex-col items-center gap-3 bg-[#f0f0f0] pt-1">
          <Svg size={10}><path d="M2 11l6-6 6 6" stroke="#aaa" strokeWidth="2.500" /></Svg>
          <Svg size={10}><path d="M2 5l6 6 6-6" stroke="#aaa" strokeWidth="2.500" /></Svg>
        </div>
      </div>
      <fieldset className="ml-[11px] mr-[3px] mt-[21px] h-20 w-[216px] border border-[#c5efd4] pl-[2px] text-black">
        <legend className="ml-1 whitespace-nowrap px-px leading-4">发送后指定字节值自动增加选项设置</legend>
        <div className="flex leading-[18px]">
          <div className="w-[93px]">
            <div className="flex h-[18px] items-center justify-between">
              <label htmlFor="startByte">起始字节n</label>
              <input id="startByte" defaultValue="0" className="h-4 w-[33px] shrink-0 border border-[#333] bg-black px-px text-[#3c9c5c]" />
            </div>
            <div className="flex h-[18px] items-center justify-between">
              <Check id="step" label="步长值" />
              <input aria-label="步长" defaultValue="1" className="h-4 w-[33px] border border-[#333] bg-black px-px text-[#888]" />
            </div>
          </div>
          <div className="ml-2 flex-1 leading-4">
            <Check id="autoVerify" label="自增自动检验" />
            <fieldset className="mr-2 mt-[6px] h-8 border border-[#c5efd4] pl-1">
              <legend className="ml-1">自增周期大小端</legend>
            </fieldset>
          </div>
        </div>
      </fieldset>
    </div>
  )
}

function AssistantWindow() {
  return (
    <section className={clsx('absolute bottom-0 left-[320px] top-[581px] flex w-[960px] flex-col overflow-hidden border border-b-0 border-[#55705f] bg-[#46c476] text-[12px] shadow-[0_0_20px_rgba(0,0,0,0.5)]', SONG)}>
      <div className={clsx('flex h-[30px] shrink-0 items-center bg-white pl-2', UI)}>
        <Svg><path d="M1 4l4-2 4 1 4-2 2 4-3 4-2 6-4-5-4-2z" fill="#6a5a44" stroke="#222" /><path d="M5 6h5l-2 5z" fill="#e8dcc0" /></Svg>
        <h2 className="ml-[5px] flex-1 text-[12px] leading-5 text-black">
          猫猫串口网络调试助手 V3.2.0 意见、BUG、改善、定制-联系阿猫:amaomails@163.com.&quot;嵌入式开发好帮手&quot; QQ交流群：233166920
        </h2>
        <button type="button" aria-label="最小化" className="flex w-[45px] justify-center"><Svg size={12}><path d="M1 8.500h14" stroke="#000" strokeWidth="1.300" /></Svg></button>
        <button type="button" aria-label="最大化" className="flex w-[45px] justify-center"><Svg size={12}><path d="M1.500 1.500h13v13h-13z" stroke="#000" strokeWidth="1.300" /></Svg></button>
        <button type="button" aria-label="关闭" className="flex w-[45px] justify-center"><Svg size={12}><path d="M1 1l14 14M15 1L1 15" stroke="#000" strokeWidth="1.300" /></Svg></button>
      </div>
      <div className="flex h-[397px] shrink-0">
        <SerialPanel />
        <div className="flex min-w-0 flex-1 flex-col pb-1 pl-1 pr-[6px]">
          <div className="flex h-[22px] items-end whitespace-nowrap leading-5 text-[#e2fbea]">
            <a href="#" className="w-[271px] underline">升级最新版:猫猫串口网络调试助手V4.9</a>
            <a href="#" className="underline">自动回复,发送扩展,字段波形,使用必读教程-&gt;&gt;</a>
          </div>
          <textarea aria-label="接收数据" className="w-full flex-1 resize-none border border-b-2 border-r-2 border-[#7a8a6a] border-b-[#eefbf2] border-r-[#eefbf2] bg-[#ffffc0] outline-none" />
        </div>
        <ReceivePanel />
      </div>
      <SendArea />
    </section>
  )
}

/* ---------- taskbar ---------- */

function SogouLogo({ size }: { size: number }) {
  return (
    <Svg size={size}>
      <path d="M1 2l13-2 2 13-13 3z" fill="#e8502c" />
      <path d="M11.500 4.500C9 3 5 3.500 5 5.700c0 2.500 6.500 1.200 6.500 4 0 2.300-4.500 2.800-7 1.300" stroke="#fff" strokeWidth="2.200" />
    </Svg>
  )
}

function ImeBar() {
  return (
    <div className="absolute bottom-10 right-0 flex h-[26px] w-[206px] items-center text-[#1c6cc0]">
      <SogouLogo size={27} />
      <div className="-ml-1 flex h-full flex-1 items-center justify-between bg-white pl-[10px] pr-[3px]">
        <span className="text-[15px] font-medium leading-5">中</span>
        <Svg size={14}><circle cx="4" cy="5" r="2.200" stroke="currentColor" strokeWidth="1.500" /><path d="M12 10v2l-2 3" stroke="currentColor" strokeWidth="3" /></Svg>
        <Svg><circle cx="8" cy="8" r="7" stroke="currentColor" strokeWidth="1.800" /><path d="M5.500 5v2M10.500 5v2M4.500 9c1 4 6 4 7 0z" stroke="currentColor" strokeWidth="1.500" /></Svg>
        <Svg><rect x="5.500" y="1" width="5" height="8" rx="2.500" fill="currentColor" /><path d="M3 7c0 6 10 6 10 0M8 12v3M5 15h6" stroke="currentColor" strokeWidth="1.800" /></Svg>
        <Svg><rect x="0.800" y="3" width="14.400" height="10" rx="1" stroke="currentColor" strokeWidth="1.500" /><path d="M3 6h10M3 8.500h10M4.500 11h7" stroke="currentColor" strokeWidth="1.500" strokeDasharray="1.500 1" /></Svg>
        <Svg className="text-[#b4bcc8]"><circle cx="6" cy="4" r="3" fill="currentColor" /><path d="M0 14c0-8 12-8 12 0z" fill="currentColor" /><path d="M9 9v5M11 9v3h4M14 9v6" stroke="#8c98a8" strokeWidth="1.500" /></Svg>
        <Svg><path d="M5 1l3 1.500L11 1l5 3-2 4-2-1v8H4V7L2 8 0 4z" fill="currentColor" /></Svg>
        <Svg><path d="M1 1h6v6H1zM9 1h6v6H9zM1 9h6v6H1z" fill="currentColor" /><path d="M10 10h4v4h-4z" stroke="currentColor" strokeWidth="2" /></Svg>
      </div>
    </div>
  )
}

function Taskbar() {
  return (
    <div className="flex h-10 shrink-0 items-center bg-gradient-to-r from-[#1f3840] to-[#1c2840] text-white">
      <button type="button" aria-label="开始" className="flex h-full w-12 items-center justify-center bg-[#243a44]">
        <Svg><path d="M0 2.300L6.800 1.300v6.200H0zM7.800 1.100L16 0v7.500H7.800zM0 8.500h6.800v6.200L0 13.700zM7.800 8.500H16V16l-8.200-1.100z" fill="#fff" /></Svg>
      </button>
      <label className="flex h-full w-[344px] items-center bg-[#f2f2f2] pl-3">
        <Svg size={18}><circle cx="9.500" cy="6" r="4.800" stroke="#222" strokeWidth="1.300" /><path d="M6 9.500L1 15" stroke="#222" strokeWidth="1.300" /></Svg>
        <input placeholder="在这里输入你要搜索的内容" className="ml-[10px] w-60 bg-transparent text-[14px] text-black outline-none placeholder:text-[#333]" />
      </label>
      <span className="flex-1" />
      <svg width="24" height="20" viewBox="0 0 24 20" aria-hidden="true">
        <path d="M6 19a5 5 0 0 1-1-10 7 7 0 0 1 13-2 6 6 0 0 1 0 12z" fill="#cfe6f7" />
        <path d="M5 17a4 4 0 0 1 0-7c3-3 7-1 8 3 3 0 4 3 3 5H7z" fill="#eef7fd" />
      </svg>
      <span className={clsx('ml-2 w-[84px] whitespace-nowrap text-[15px]', NARROW)}>20°C 多云</span>
      <div className="flex w-[158px] items-center justify-between">
        <Svg size={14}><path d="M2 11l6-6 6 6" stroke="#fff" strokeWidth="1.500" /></Svg>
        <Svg size={18}><rect x="5.500" y="0" width="5" height="10" fill="#fff" /><path d="M4 8c0 5 8 5 8 0M8 12v3M5 15h6" stroke="#fff" /></Svg>
        <Svg size={18}><path d="M5 5.500h9.500v6H5z" stroke="#fff" strokeWidth="1.300" /><path d="M7 7h6v3H7z" fill="#fff" /><path d="M1 3v3h4V3M2 1v2M4 1v2M3 6v4h2" stroke="#fff" /></Svg>
        <Svg size={14}><path d="M2 15C2 8 7 3 14 3M5 15c0-5 4-9 9-9M8 15c0-4 3-6 6-6M11 15c0-2 1-3 3-3" stroke="#ddd" strokeWidth="1.200" /></Svg>
        <Svg><path d="M1 6h2l3-3v10l-3-3H1zM9 5c1 2 1 4 0 6M11.500 3.500c2 3 2 6 0 9M14 2c2.500 4 2.500 8 0 12" stroke="#fff" /></Svg>
        <Svg><path d="M3 11a3 3 0 0 1 0-6 5 5 0 0 1 9-1l2 3-5 4z" fill="#9a9aa0" /><circle cx="11.500" cy="11.500" r="4.500" fill="#c8203c" /><path d="M10 10l3 3M13 10l-3 3" stroke="#fff" /></Svg>
        <span className="text-[14px]">中</span>
      </div>
      <span className="ml-3"><SogouLogo size={17} /></span>
      <div className="w-[92px] text-center text-[13px] leading-[19px]">
        <p>17:38</p>
        <p>2021/10/29</p>
      </div>
      <button type="button" aria-label="通知" className="mx-[2px]">
        <Svg size={18}><path d="M0 1h16v11h-4v3l-4-3H0z" fill="#fff" /><path d="M3 4.500h10M3 6.500h10M3 8.500h7" stroke="#1c2840" /><path d="M12 10a3 3 0 1 0 3 4" stroke="#fff" strokeWidth="1.500" /></Svg>
      </button>
      <span className="ml-[17px] mr-1 h-full w-px bg-[#4c586c]" />
    </div>
  )
}

function Watermark() {
  return (
    <div className="pointer-events-none absolute bottom-[55px] right-[53px] flex items-center gap-4">
      <svg width="97" height="97" viewBox="0 0 97 97" aria-hidden="true" className="drop-shadow-md">
        <rect width="97" height="97" rx="20" fill="#526672" fillOpacity="0.95" />
        <path d="M41 15L57 31 41 48 25 31z" fill="#fff" />
        <path d="M59 33L75 49 41 83 25 67z" fill="#8af5d4" />
      </svg>
      <span className="pt-1 text-[42px] leading-[48px] text-white/90 [text-shadow:1px_1px_4px_rgba(0,0,0,0.4)]">万兴喵影</span>
    </div>
  )
}

export default function App() {
  return (
    <div className={clsx('relative flex h-screen flex-col overflow-hidden bg-[#f0f0f0]', UI)}>
      <Header />
      <main className="flex min-h-0 flex-1 gap-1">
        <DevicePanel />
        <div className="flex min-w-0 flex-1 flex-col">
          <Editor />
          <Messages />
        </div>
      </main>
      <StatusBar />
      <Taskbar />
      <AssistantWindow />
      <Watermark />
      <ImeBar />
      <svg width="9" height="18" viewBox="0 0 9 18" aria-hidden="true" className="pointer-events-none absolute left-[899px] top-[681px]">
        <path d="M1 0.500h2l1.500 1 1.500-1h2M4.500 1v16M1 17.500h2l1.500-1 1.500 1h2" stroke="#222" fill="none" />
      </svg>
    </div>
  )
}
